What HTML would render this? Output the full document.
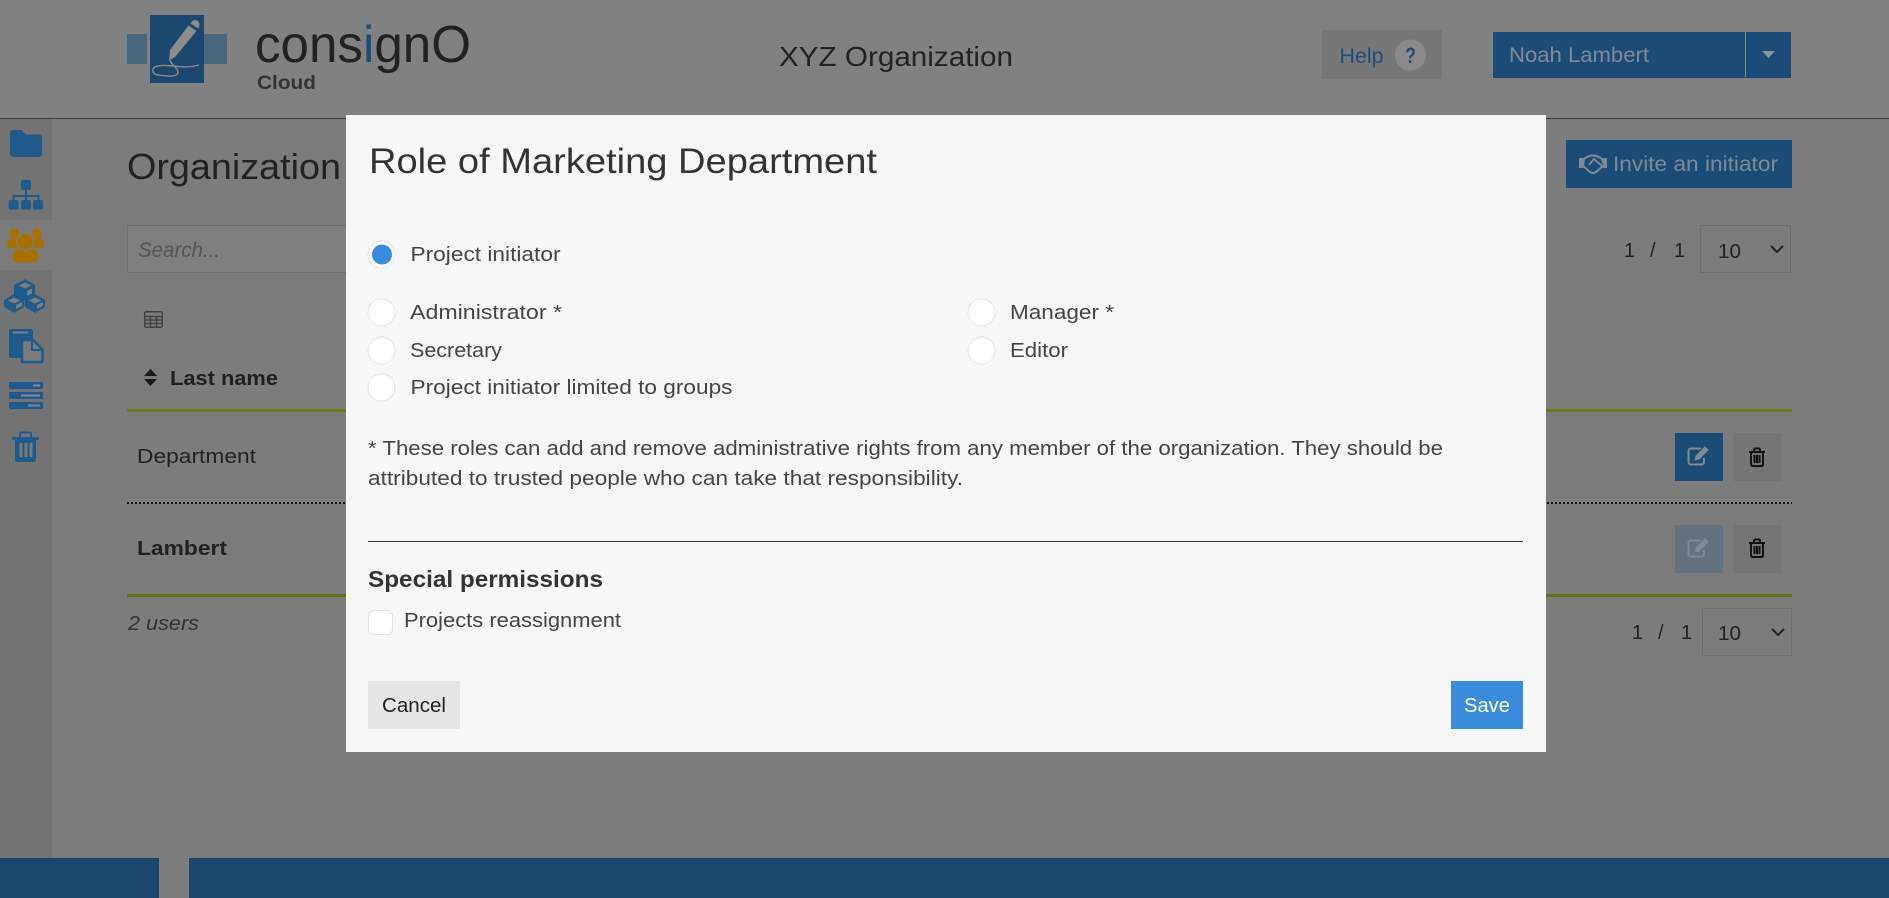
<!DOCTYPE html>
<html lang="en"><head><meta charset="utf-8"><title>Role of Marketing Department</title>
<style>
html,body{margin:0;padding:0;width:1889px;height:898px;overflow:hidden;background:#7c7c7c}
.r{position:absolute;display:block}
svg{position:absolute;left:0;top:0;display:block}
text{font-family:"Liberation Sans",sans-serif;fill:#444;font-size:20px}
.d{fill:#222}
.b{font-weight:700}
.i{font-style:italic}
.w{fill:#808a92;font-size:21.5px}
</style></head><body>
<div class="r" style="left:0;top:0;width:1889px;height:898px;background:#7c7c7c"></div>
<div class="r" style="left:0;top:0;width:1889px;height:118px;background:#818181"></div>
<div class="r" style="left:0;top:118px;width:1889px;height:1px;background:#3c3c3c"></div>
<div class="r" style="left:0;top:119px;width:52px;height:739px;background:#737373"></div>
<div class="r" style="left:0;top:220px;width:52px;height:50px;background:#7c7c7c"></div>
<div class="r" style="left:0;top:858px;width:159px;height:40px;background:#1b476c"></div>
<div class="r" style="left:189px;top:858px;width:1700px;height:40px;background:#1b476c"></div>
<svg width="1889" height="898" viewBox="0 0 1889 898" xmlns="http://www.w3.org/2000/svg">
<!-- logo -->
<rect x="127" y="34" width="20" height="30" fill="#4a667b"/>
<rect x="204" y="34" width="23" height="30" fill="#4a667b"/>
<rect x="150" y="15" width="54" height="68" fill="#1c476e"/>
<path d="M190.500 23.500Q193 19 197 20.500Q201 23 198.500 28.500ZM188.500 25.500L196.500 31L175 57L169 60.500L170 50Z" fill="#8c8c8c"/>
<path d="M170 60C172 66 178 68 178 72C178 78 165 76 158 75C151 74 151 67 158 66C166 64 178 67 184 67C190 67 195 66 199 65" fill="none" stroke="#8c8c8c" stroke-width="1.400"/>
<text x="255" y="62" textLength="216" lengthAdjust="spacingAndGlyphs" style="font-size:52px;fill:#222">cons<tspan fill="#1c4d7a">i</tspan>gnO</text>
<text x="257" y="89" textLength="59" lengthAdjust="spacingAndGlyphs" class="b" style="font-size:19px;fill:#333">Cloud</text>
<text x="779" y="66" textLength="234" lengthAdjust="spacingAndGlyphs" class="d" style="font-size:28px">XYZ Organization</text>

<!-- help -->
<rect x="1322" y="30" width="120" height="49" fill="#777"/>
<text x="1339.500" y="63" textLength="44" lengthAdjust="spacingAndGlyphs" style="font-size:21.500px;fill:#1f4d7a">Help</text>
<circle cx="1410.500" cy="55" r="15.500" fill="#8a8a8a"/>
<text x="1405" y="63" textLength="11" lengthAdjust="spacingAndGlyphs" class="b" style="font-size:22px;fill:#1f4d7a">?</text>

<!-- user -->
<rect x="1493" y="32" width="298" height="46" fill="#1b4c78"/>
<rect x="1745" y="32" width="1" height="45" fill="#7d8f9e"/>
<text x="1509" y="62" textLength="140" lengthAdjust="spacingAndGlyphs" class="w">Noah Lambert</text>
<path d="M1762 51h13l-6.500 7z" fill="#8a959e"/>

<!-- heading -->
<text x="127" y="179" textLength="214" lengthAdjust="spacingAndGlyphs" style="font-size:36px;fill:#222">Organization</text>

<!-- invite -->
<rect x="1566" y="140" width="226" height="48" fill="#1b4c78"/>
<path d="M1579 158h4v10h-4zM1603 158h4v10h-4z" fill="#808a92"/>
<path d="M1584 159q9-7 18 0l2 6-8 7q-3 2-6 0l-7-6zM1589 165l5-6 8 7" fill="none" stroke="#808a92" stroke-width="2"/>
<text x="1613" y="171" textLength="165" lengthAdjust="spacingAndGlyphs" class="w">Invite an initiator</text>

<!-- search and top pagination -->
<rect x="127.500" y="225.500" width="240" height="47" fill="#7f7f7f" stroke="#6e6e6e"/>
<text x="138" y="257" textLength="82" lengthAdjust="spacingAndGlyphs" class="i" style="font-size:21px;fill:#555">Search...</text>
<text x="1624" y="257" class="d">1</text>
<text x="1650" y="257" class="d">/</text>
<text x="1674" y="257" class="d">1</text>
<rect x="1700.500" y="225.500" width="90" height="47" fill="#7c7c7c" stroke="#6e6e6e"/>
<text x="1718" y="258" textLength="23" lengthAdjust="spacingAndGlyphs" class="d">10</text>
<path d="M1771 246l6 6 6-6" fill="none" stroke="#222" stroke-width="2"/>

<!-- table header -->
<g fill="none" stroke="#444" stroke-width="1.500">
<rect x="144.700" y="311.700" width="17.600" height="15.600" rx="1.500"/>
<path d="M145 316.500h17M145 320h17M145 323.500h17M150.500 316v11M156.500 316v11"/>
</g>
<path d="M150.500 369l6.500 7h-13zM144 379h13l-6.500 7z" fill="#1a1a1a"/>
<text x="170" y="385" textLength="108" lengthAdjust="spacingAndGlyphs" class="b" style="fill:#1f1f1f;font-size:20.500px">Last name</text>
<rect x="127" y="409" width="1665" height="3" fill="#65801a"/>
<line x1="127" y1="503" x2="1792" y2="503" stroke="#111" stroke-width="2" stroke-dasharray="2 2"/>
<rect x="127" y="594" width="1665" height="3" fill="#5e7614"/>
<text x="137" y="463" textLength="119" lengthAdjust="spacingAndGlyphs" class="d">Department</text>
<text x="137" y="555" textLength="90" lengthAdjust="spacingAndGlyphs" class="d b">Lambert</text>
<text x="128" y="630" textLength="71" lengthAdjust="spacingAndGlyphs" class="i" style="fill:#333">2 users</text>

<!-- row buttons -->
<rect x="1675" y="433" width="48" height="48" fill="#1b4c78"/>
<rect x="1733" y="433" width="48" height="48" fill="#757575"/>
<rect x="1675" y="525" width="48" height="48" fill="#64727f"/>
<rect x="1733" y="525" width="48" height="48" fill="#757575"/>
<g fill="none" stroke="#808a92" stroke-width="2">
<path d="M1704 458v4a2.500 2.500 0 0 1-2.500 2.500h-10.500a2.500 2.500 0 0 1-2.500-2.500v-11a2.500 2.500 0 0 1 2.500-2.500h10"/>
<path d="M1695 460l1-4 9-9 3 3-9 9z" fill="#808a92" stroke-width="1"/>
<path transform="translate(0 92)" d="M1704 458v4a2.500 2.500 0 0 1-2.500 2.500h-10.500a2.500 2.500 0 0 1-2.500-2.500v-11a2.500 2.500 0 0 1 2.500-2.500h10"/>
<path transform="translate(0 92)" d="M1695 460l1-4 9-9 3 3-9 9z" fill="#808a92" stroke-width="1"/>
</g>
<g fill="none" stroke="#111" stroke-width="2">
<path d="M1749 452h16M1754 452v-2q0-1.500 1.500-1.500h3q1.500 0 1.500 1.500v2M1751 452v12q0 2 2 2h8q2 0 2-2v-12M1754.500 455v8M1757 455v8M1759.500 455v8"/>
<path transform="translate(0 91)" d="M1749 452h16M1754 452v-2q0-1.500 1.500-1.500h3q1.500 0 1.500 1.500v2M1751 452v12q0 2 2 2h8q2 0 2-2v-12M1754.500 455v8M1757 455v8M1759.500 455v8"/>
</g>

<!-- bottom pagination -->
<text x="1632" y="639" class="d">1</text>
<text x="1658" y="639" class="d">/</text>
<text x="1681" y="639" class="d">1</text>
<rect x="1702.500" y="608.500" width="89" height="47" fill="#7c7c7c" stroke="#6e6e6e"/>
<text x="1718" y="640" textLength="23" lengthAdjust="spacingAndGlyphs" class="d">10</text>
<path d="M1772 629l6 6 6-6" fill="none" stroke="#222" stroke-width="2"/>

<!-- sidebar icons -->
<g fill="#1e5a8c">
<path d="M13 130h8l5 4.500h13a3 3 0 0 1 3 3v16.500a3 3 0 0 1-3 3H13a3 3 0 0 1-3-3V133a3 3 0 0 1 3-3z"/>
<rect x="21" y="180" width="10" height="10" rx="2"/>
<rect x="8.500" y="200" width="10" height="9.500" rx="2"/>
<rect x="21" y="200" width="10" height="9.500" rx="2"/>
<rect x="33" y="200" width="10" height="9.500" rx="2"/>
<path d="M25 190h2v5h12.500v5h-2v-3H27v3h-2v-3H14.500v3h-2v-5H25z"/>
<path d="M25 279.300L35 285v10l-10 5.500-11-5.500v-10z"/>
<path d="M14 294L24.300 300v7L14 312.700 4 307v-7z"/>
<path d="M35 294L45 300v7l-10 5.700-10-5.700v-7z"/>
<g fill="#7c7c7c">
<path d="M25 282.500l6.500 3-6.500 3-6.500-3z"/>
<path d="M14 297.500l6.500 3-6.500 3-6.500-3z"/>
<path d="M35 297.500l6.500 3-6.500 3-6.500-3z"/>
<path d="M27 291l5-2.500v5l-5 2.500zM16 305l6-3v4l-6 3zM37 305l6-3v4l-6 3z"/>
</g>
<path d="M11 329h20a2 2 0 0 1 2 2v27H11a2 2 0 0 1-2-2V331a2 2 0 0 1 2-2z"/>
<rect x="13" y="331.500" width="15" height="2" fill="#7f7f7f"/>
<path d="M23 340h10l9.500 9.500v11.500a1 1 0 0 1-1 1H23a1 1 0 0 1-1-1v-20a1 1 0 0 1 1-1z" fill="#7a7a7a" stroke="#1e5a8c" stroke-width="2.500"/>
<path d="M32 340v10h10" fill="none" stroke="#1e5a8c" stroke-width="2"/>
<rect x="9" y="382" width="34" height="7" rx="1"/>
<rect x="9" y="392" width="34" height="7" rx="1"/>
<rect x="9" y="402" width="34" height="7" rx="1"/>
<g fill="#888">
<rect x="33" y="384.500" width="7" height="2"/>
<rect x="21" y="394.500" width="19" height="2"/>
<rect x="28" y="404.500" width="12" height="2"/>
</g>
<rect x="12" y="437" width="27" height="3" rx="1"/>
<path d="M20 437v-3q0-1.500 1.500-1.500h8q1.500 0 1.500 1.500v3" fill="none" stroke="#1e5a8c" stroke-width="2"/>
<path d="M15 440h21v19q0 3-3 3H18q-3 0-3-3z"/>
<g fill="#7a7a7a">
<rect x="19.500" y="443" width="3" height="14"/>
<rect x="24.500" y="443" width="3" height="14"/>
<rect x="29.500" y="443" width="3" height="14"/>
</g>
</g>
<g fill="#a87000">
<circle cx="14.300" cy="233.500" r="5"/>
<circle cx="36.700" cy="233.500" r="5"/>
<path d="M7.300 245q0-7 6-7h5v10h-9q-2 0-2-3zM44 245q0-7-6-7h-5v10h9q2 0 2-3z"/>
<path d="M12 256q0-8 8-8h11q8 0 8 8v3q0 4-4 4H16q-4 0-4-4z" stroke="#7c7c7c" stroke-width="1.500"/>
<circle cx="25.300" cy="241.700" r="8.500" stroke="#7c7c7c" stroke-width="1.500"/>
</g>

<!-- modal -->
<rect x="346" y="115" width="1200" height="637" fill="#f7f7f7"/>
<text x="369" y="173" textLength="508" lengthAdjust="spacingAndGlyphs" style="font-size:35px;fill:#333">Role of Marketing Department</text>

<g fill="#fff" stroke="#e2e2e2" stroke-width="1">
<circle cx="381.500" cy="254.500" r="13.500"/>
<circle cx="381.500" cy="312.500" r="13.500"/>
<circle cx="381.500" cy="350.500" r="13.500"/>
<circle cx="381.500" cy="387.500" r="13.500"/>
<circle cx="981.500" cy="312.500" r="13.500"/>
<circle cx="981.500" cy="350.500" r="13.500"/>
<rect x="368.500" y="610.500" width="24" height="24" rx="5"/>
</g>
<circle cx="382" cy="254.500" r="10" fill="#3a8bdb"/>
<text x="410.500" y="261" textLength="150" lengthAdjust="spacingAndGlyphs">Project initiator</text>
<text x="410" y="319" textLength="152" lengthAdjust="spacingAndGlyphs">Administrator *</text>
<text x="410" y="357" textLength="92" lengthAdjust="spacingAndGlyphs">Secretary</text>
<text x="410.500" y="394" textLength="322" lengthAdjust="spacingAndGlyphs">Project initiator limited to groups</text>
<text x="1010" y="319" textLength="104" lengthAdjust="spacingAndGlyphs">Manager *</text>
<text x="1010" y="357" textLength="58" lengthAdjust="spacingAndGlyphs">Editor</text>
<text x="368" y="455" textLength="1075" lengthAdjust="spacingAndGlyphs">* These roles can add and remove administrative rights from any member of the organization. They should be</text>
<text x="368" y="485" textLength="595" lengthAdjust="spacingAndGlyphs">attributed to trusted people who can take that responsibility.</text>
<rect x="368" y="541" width="1155" height="1" fill="#333"/>
<text x="368" y="587" textLength="235" lengthAdjust="spacingAndGlyphs" class="b" style="font-size:23px;fill:#333">Special permissions</text>
<text x="404" y="627" textLength="217" lengthAdjust="spacingAndGlyphs">Projects reassignment</text>
<rect x="368" y="681" width="92" height="48" fill="#e6e6e6"/>
<text x="382" y="712" textLength="64" lengthAdjust="spacingAndGlyphs" style="fill:#222">Cancel</text>
<rect x="1451" y="681" width="72" height="48" fill="#3a8bdb"/>
<text x="1464" y="712" textLength="46" lengthAdjust="spacingAndGlyphs" style="fill:#fff">Save</text>
</svg>
</body></html>
